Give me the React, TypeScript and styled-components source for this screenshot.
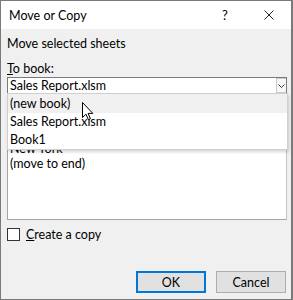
import React from "react";
import styled, { createGlobalStyle } from "styled-components";

const GlobalStyle = createGlobalStyle`
  html, body {
    margin: 0;
    padding: 0;
    background: #ffffff;
  }
  body {
    font-family: Lato, "Noto Sans", sans-serif;
    font-size: 12.5px;
    color: #000;
  }
`;

const Window = styled.div`
  width: 293px;
  height: 300px;
  box-sizing: border-box;
  border: 1px solid #7a7a7a;
  border-right-width: 2px;
  background: #f0f0f0;
  display: flex;
  flex-direction: column;
  position: relative;
  overflow: hidden;
`;

const TitleBar = styled.header`
  height: 28px;
  background: #ffffff;
  display: flex;
  align-items: center;
  padding-left: 8px;
  flex-shrink: 0;
`;

const Title = styled.span`
  flex: 1;
`;

const TitleButton = styled.span`
  width: 44px;
  display: flex;
  justify-content: center;
  align-items: center;
  font-size: 13px;
`;

const Body = styled.div`
  flex: 1;
  display: flex;
  flex-direction: column;
  padding: 0 4px 0 6px;
`;

const Label = styled.div<{ $top?: number }>`
  margin-top: ${(p) => p.$top ?? 0}px;
  height: 15px;
  line-height: 15px;
  white-space: nowrap;
`;

const Accel = styled.span`
  text-decoration: underline;
  text-underline-offset: 1px;
`;

const ComboArea = styled.div`
  position: relative;
  margin-top: 1px;
`;

const Combo = styled.div`
  height: 17px;
  box-sizing: border-box;
  border: 1px solid #7a7a7a;
  background: #fff;
  display: flex;
  align-items: center;
`;

const ComboText = styled.span`
  flex: 1;
  padding-left: 2px;
  line-height: 15px;
`;

const ComboArrow = styled.span`
  width: 10px;
  height: 15px;
  box-sizing: border-box;
  border: 1px solid #cccccc;
  border-right: none;
  background: #f7f7f7;
  display: flex;
  align-items: center;
  justify-content: center;
`;

const Dropdown = styled.ul`
  position: absolute;
  left: 0;
  right: -1px;
  top: 16px;
  margin: 0;
  padding: 0;
  list-style: none;
  background: #fff;
  border: 1px solid #d0d0d0;
  box-shadow: 1px 2px 3px rgba(0, 0, 0, 0.16);
  z-index: 2;
`;

const DropItem = styled.li<{ $hot?: boolean; $h: number }>`
  height: ${(p) => p.$h}px;
  line-height: ${(p) => p.$h}px;
  padding-left: 2px;
  background: ${(p) => (p.$hot ? "#f0f0f0" : "transparent")};
`;

const ListBox = styled.div`
  margin-top: 26px;
  height: 100px;
  box-sizing: border-box;
  border: 1px solid #a5a5a5;
  border-right-color: #c4c4c4;
  background: #fff;
  padding: 20px 2px 0;
  display: flex;
  flex-direction: column;
`;

const ListItem = styled.div`
  height: 15px;
  line-height: 15px;
`;

const CheckRow = styled.label`
  display: flex;
  align-items: center;
  gap: 6px;
  margin-top: 8px;
  height: 13px;
`;

const CheckBox = styled.span`
  width: 13px;
  height: 13px;
  box-sizing: border-box;
  border: 1px solid #333;
  background: #fff;
`;

const ButtonRow = styled.div`
  margin-top: auto;
  margin-bottom: 6px;
  display: flex;
  justify-content: flex-end;
  gap: 10px;
  padding-right: 1px;
`;

const Button = styled.button<{ $default?: boolean }>`
  width: 70px;
  height: 22px;
  box-sizing: border-box;
  font: inherit;
  color: #000;
  background: #e1e1e1;
  border: ${(p) => (p.$default ? "2px solid #0078d7" : "1px solid #adadad")};
  padding: 0;
`;

const Cursor = styled.svg`
  position: absolute;
  left: 81px;
  top: 101px;
  z-index: 3;
`;

export default function App() {
  return (
    <>
      <GlobalStyle />
      <Window>
        <TitleBar>
          <Title>Move or Copy</Title>
          <TitleButton>?</TitleButton>
          <TitleButton>
            <svg width="10" height="10" viewBox="0 0 10 10">
              <path d="M0.5 0.5 L9.5 9.5 M9.5 0.5 L0.5 9.5" stroke="#222" strokeWidth="1" />
            </svg>
          </TitleButton>
        </TitleBar>
        <Body>
          <Label $top={7}>Move selected sheets</Label>
          <Label $top={10}>
            <Accel>T</Accel>o book:
          </Label>
          <ComboArea>
            <Combo>
              <ComboText>Sales Report.xlsm</ComboText>
              <ComboArrow>
                <svg width="7" height="4" viewBox="0 0 7 4">
                  <path d="M0.5 0.5 L3.5 3.5 L6.5 0.5" stroke="#333" fill="none" />
                </svg>
              </ComboArrow>
            </Combo>
            <Dropdown>
              <DropItem $hot $h={19}>(new book)</DropItem>
              <DropItem $h={18}>Sales Report.xlsm</DropItem>
              <DropItem $h={18}>Book1</DropItem>
            </Dropdown>
          </ComboArea>
          <ListBox>
            <ListItem>New York</ListItem>
            <ListItem>(move to end)</ListItem>
          </ListBox>
          <CheckRow>
            <CheckBox />
            <span>
              <Accel>C</Accel>reate a copy
            </span>
          </CheckRow>
          <ButtonRow>
            <Button $default>OK</Button>
            <Button>Cancel</Button>
          </ButtonRow>
        </Body>
        <Cursor width="12" height="19" viewBox="0 0 12 19">
          <path
            d="M0.5 0.5 L0.5 15.5 L4 12.2 L6.3 17.6 L8.4 16.7 L6.1 11.4 L10.8 11.4 Z"
            fill="#fff"
            stroke="#000"
            strokeWidth="1"
            strokeLinejoin="round"
          />
        </Cursor>
      </Window>
    </>
  );
}
